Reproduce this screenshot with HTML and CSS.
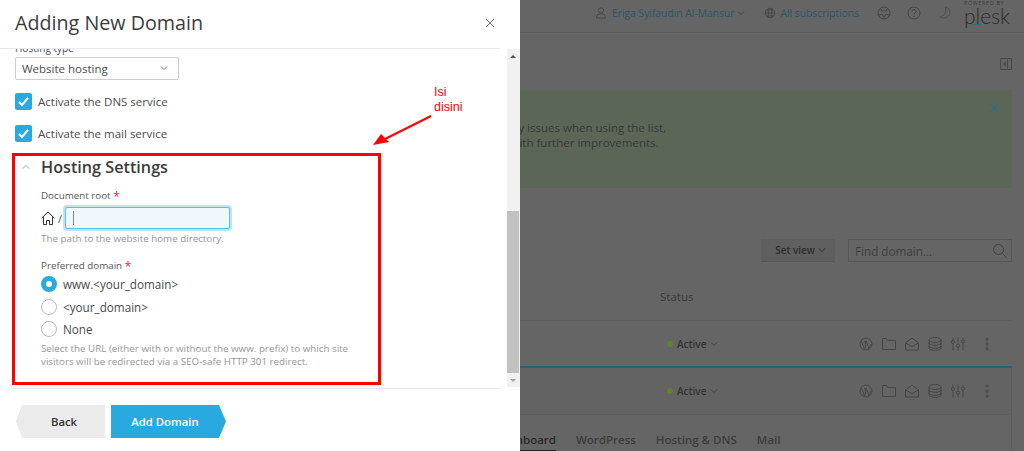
FILE: index.html
```html
<!DOCTYPE html>
<html>
<head>
    <meta charset="utf-8">
    <title>Adding New Domain</title>
    <link rel="stylesheet" href="styles.css">
</head>
<body>
    <div class="page">
        <div class="topbar">
            <svg class="top-icon" viewBox="0 0 14 14"><circle cx="7" cy="4" r="3"/><path d="M2 13v-2c0-2 2-3 5-3s5 1 5 3v2z"/></svg>
            <span class="top-link">Eriga Syifaudin Al-Mansur</span>
            <svg class="chev" viewBox="0 0 8 8"><path d="M1 2.500l3 3 3-3"/></svg>
            <svg class="top-icon globe" viewBox="0 0 14 14"><circle cx="7" cy="7" r="5.500"/><path d="M1.500 7h11M3 3.500h8M3 10.500h8M5 1.800v10.400M9 1.800v10.400"/></svg>
            <span class="top-link">All subscriptions</span>
            <svg class="top-round cat" viewBox="0 0 16 16"><circle cx="8" cy="8" r="6"/><path d="M4 3l2 3h4l2-3M3 10l3-1 2 3 2-3 3 1M8 12v2"/></svg>
            <svg class="top-round help" viewBox="0 0 16 16"><circle cx="8" cy="8" r="6"/><path d="M6 6.500c0-2.500 4-2.500 4 0 0 1.500-2 1.500-2 3M8 11v1"/></svg>
            <svg class="top-round moon" viewBox="0 0 16 16"><path d="M10 2c2 4 0 9-5 10 3 2 9 1 10-4 .5-3-2-6-5-6z"/></svg>
            <div class="logo">
                <span class="logo-small">POWERED BY</span>
                <span class="logo-name">plesk</span>
            </div>
        </div>

        <div class="panel-toggle">
            <svg viewBox="0 0 12 12"><path d="M.5.500h11v11H.5zM7.500.500v11"/><path class="fill" d="M5.500 3.500v5L2.500 6z"/></svg>
        </div>

        <div class="alert">
            <p>any issues when using the list,</p>
            <p class="alert-second">us with further improvements.</p>
            <svg class="alert-close" viewBox="0 0 10 10"><path d="M1.500 1.500l7 7M8.500 1.500l-7 7"/></svg>
        </div>

        <div class="toolbar">
            <div class="set-view">Set view <svg class="chev" viewBox="0 0 8 8"><path d="M1 2.500l3 3 3-3"/></svg></div>
            <div class="find">
                <span>Find domain...</span>
                <svg viewBox="0 0 16 16"><circle cx="6.500" cy="6.500" r="5"/><path d="M10.500 10.500l4 4"/></svg>
            </div>
        </div>

        <div class="table-head"><span>Status</span></div>

        <div class="row">
            <div class="status"><i class="dot"></i>Active <svg class="chev" viewBox="0 0 8 8"><path d="M1 2.500l3 3 3-3"/></svg></div>
            <div class="row-icons">
                <svg viewBox="0 0 14 14"><circle cx="7" cy="7" r="6"/><path d="M2.500 4.500l3 7.500 1.500-4.500-1.500-3.500M5 4.500h3M7.500 4.500l2.500 7.500 2-5"/></svg>
                <svg viewBox="0 0 14 14"><path d="M.5 12.500v-11h4l1 2h8v9z"/></svg>
                <svg viewBox="0 0 14 14"><path d="M.5 6l6.500-5 6.500 5v7H.5zM.5 6L7 9.500 13.500 6"/></svg>
                <svg viewBox="0 0 14 14"><ellipse cx="7" cy="3" rx="6" ry="2.500"/><path d="M1 3v8c0 3 12 3 12 0V3M1 6c0 3 12 3 12 0M1 9c0 3 12 3 12 0"/></svg>
                <svg viewBox="0 0 14 14"><path d="M2 .5v3M2 7v6.500M7 .5v6M7 10v3.500M12 .5v2M12 6v7.500"/><circle cx="2" cy="5" r="1.500"/><circle cx="7" cy="8.500" r="1.500"/><circle cx="12" cy="4.500" r="1.500"/></svg>
                <svg class="more" viewBox="0 0 4 14"><circle cx="2" cy="2" r="1.200"/><circle cx="2" cy="7" r="1.200"/><circle cx="2" cy="12" r="1.200"/></svg>
            </div>
        </div>

        <div class="row row-open">
            <div class="status"><i class="dot"></i>Active <svg class="chev" viewBox="0 0 8 8"><path d="M1 2.500l3 3 3-3"/></svg></div>
            <div class="row-icons">
                <svg viewBox="0 0 14 14"><circle cx="7" cy="7" r="6"/><path d="M2.500 4.500l3 7.500 1.500-4.500-1.500-3.500M5 4.500h3M7.500 4.500l2.500 7.500 2-5"/></svg>
                <svg viewBox="0 0 14 14"><path d="M.5 12.500v-11h4l1 2h8v9z"/></svg>
                <svg viewBox="0 0 14 14"><path d="M.5 6l6.500-5 6.500 5v7H.5zM.5 6L7 9.500 13.500 6"/></svg>
                <svg viewBox="0 0 14 14"><ellipse cx="7" cy="3" rx="6" ry="2.500"/><path d="M1 3v8c0 3 12 3 12 0V3M1 6c0 3 12 3 12 0M1 9c0 3 12 3 12 0"/></svg>
                <svg viewBox="0 0 14 14"><path d="M2 .5v3M2 7v6.500M7 .5v6M7 10v3.500M12 .5v2M12 6v7.500"/><circle cx="2" cy="5" r="1.500"/><circle cx="7" cy="8.500" r="1.500"/><circle cx="12" cy="4.500" r="1.500"/></svg>
                <svg class="more" viewBox="0 0 4 14"><circle cx="2" cy="2" r="1.200"/><circle cx="2" cy="7" r="1.200"/><circle cx="2" cy="12" r="1.200"/></svg>
            </div>
        </div>

        <div class="tabs">
            <span class="tab tab-active">Dashboard</span>
            <span class="tab">WordPress</span>
            <span class="tab">Hosting &amp; DNS</span>
            <span class="tab">Mail</span>
        </div>
    </div>

    <div class="drawer">
        <div class="drawer-head">
            <h1>Adding New Domain</h1>
            <svg class="close" viewBox="0 0 10 10"><path d="M1 1l8 8M9 1l-8 8"/></svg>
        </div>

        <div class="drawer-main">
            <div class="form">
                <div class="clipped-label">Hosting type</div>
                <div class="select">Website hosting <svg viewBox="0 0 8 8"><path d="M1 2.500l3 3 3-3"/></svg></div>

                <label class="check">
                    <svg viewBox="0 0 17 17"><rect width="17" height="17" rx="2"/><path d="M4 9l3 3 6-7"/></svg>
                    Activate the DNS service
                </label>
                <label class="check check-mail">
                    <svg viewBox="0 0 17 17"><rect width="17" height="17" rx="2"/><path d="M4 9l3 3 6-7"/></svg>
                    Activate the mail service
                </label>

                <div class="section-title">
                    <svg viewBox="0 0 10 10"><path d="M1 7l4-4 4 4"/></svg>
                    <h2>Hosting Settings</h2>
                </div>

                <div class="section-body">
                    <div class="field-label">Document root <span class="req">*</span></div>
                    <div class="path-row">
                        <svg viewBox="0 0 14 14"><path d="M.7 7L7 1l6.300 6M2.500 5.500v8h3v-4h3v4h3v-8"/></svg>
                        <span class="slash">/</span>
                        <div class="path-input"><i class="caret"></i></div>
                    </div>
                    <div class="hint hint-path">The path to the website home directory.</div>

                    <div class="field-label field-domain">Preferred domain <span class="req">*</span></div>
                    <div class="radio"><i class="bullet bullet-on"></i>www.&lt;your_domain&gt;</div>
                    <div class="radio"><i class="bullet"></i>&lt;your_domain&gt;</div>
                    <div class="radio"><i class="bullet"></i>None</div>
                    <div class="hint hint-domain">Select the URL (either with or without the www. prefix) to which site<br>visitors will be redirected via a SEO-safe HTTP 301 redirect.</div>
                </div>
            </div>

            <div class="scrollbar">
                <svg class="arrow" viewBox="0 0 8 4"><path d="M0 4l4-4 4 4z"/></svg>
                <div class="thumb"></div>
                <svg class="arrow arrow-down" viewBox="0 0 8 4"><path d="M0 0l4 4 4-4z"/></svg>
            </div>
        </div>

        <div class="drawer-foot">
            <div class="btn btn-back">Back</div>
            <div class="btn btn-add">Add Domain</div>
        </div>
    </div>

    <div class="mark-box"></div>
    <div class="mark-note">Isi<br>disini</div>
    <svg class="mark-arrow" viewBox="0 0 60 32"><path class="shaft" d="M58 1L12 24"/><path class="head" d="M0 30l8-11 8 8z"/></svg>
</body>
</html>
```

FILE: styles.css
```css
html {
    font-family: "Open Sans", Arial, sans-serif;
}

body {
    margin: 0;
    width: 1024px;
    height: 451px;
    overflow: hidden;
    position: relative;
    background-color: #656565;
}

p,
h1,
h2 {
    margin: 0;
    font-weight: normal;
}

svg {
    display: block;
    fill: none;
    stroke: currentColor;
}

.chev {
    width: 8px;
    height: 8px;
    stroke-width: 1;
}

/* dimmed page behind the drawer */
.page {
    height: 451px;
    padding-right: 12px;
    box-sizing: border-box;
    color: #333;
    font-size: 13px;
}

.topbar {
    height: 33px;
    box-sizing: border-box;
    margin-right: -12px;
    padding-bottom: 7px;
    border-bottom: 1px solid #5a5a5a;
    display: flex;
    align-items: center;
    justify-content: flex-end;
    color: #2f5668;
    font-size: 10.300px;
    position: relative;
}

.topbar .chev {
    margin-left: 3px;
    color: #454545;
}

.top-icon {
    width: 12px;
    height: 12px;
    margin-right: 5px;
    color: #444;
}

.globe {
    margin-left: 19px;
    margin-right: 4px;
}

.top-round {
    width: 16px;
    height: 16px;
    color: #454545;
    margin-left: 14px;
}

.cat {
    margin-left: 17px;
}

.moon {
    margin-left: 13px;
    color: #505050;
}

.logo {
    width: 47px;
    margin: 7px 13px 0 13px;
    height: 32px;
    color: #2b2b2b;
    position: relative;
    overflow: hidden;
}

.logo:after {
    content: "";
    position: absolute;
    left: 9px;
    top: 24px;
    width: 9px;
    height: 1px;
    background-color: #2f6f86;
}

.logo-small {
    display: block;
    font-size: 5.500px;
    line-height: 6px;
    letter-spacing: .6px;
    white-space: nowrap;
    color: #3c3c3c;
}

.logo-name {
    display: block;
    font-family: Lato, sans-serif;
    font-weight: 300;
    font-size: 21px;
    line-height: 20px;
}

.panel-toggle {
    height: 52px;
    padding-top: 5px;
    display: flex;
    align-items: center;
    justify-content: flex-end;
    color: #4a4a4a;
}

.panel-toggle svg {
    width: 12px;
    height: 12px;
}

.panel-toggle .fill {
    fill: #4a4a4a;
    stroke: none;
}

.alert {
    height: 98px;
    background-color: #5b6656;
    padding: 30px 0 0 521px;
    box-sizing: border-box;
    position: relative;
    font-size: 11.500px;
    line-height: 15px;
    color: #3a3a3a;
    white-space: nowrap;
}

.alert p {
    margin-left: -16px;
}

.alert .alert-second {
    margin-left: -26px;
}

.alert-close {
    position: absolute;
    right: 13px;
    top: 13px;
    width: 10px;
    height: 10px;
    color: #2f6f86;
    stroke-width: 1.300;
}

.toolbar {
    margin-top: 51px;
    height: 23px;
    display: flex;
    justify-content: flex-end;
    gap: 13px;
    font-size: 10px;
}

.set-view {
    width: 74px;
    display: flex;
    align-items: center;
    justify-content: flex-end;
    padding-right: 9px;
    box-sizing: border-box;
    gap: 3px;
    background-color: #5f5f5f;
    border-bottom: 1px solid #585858;
    font-weight: 600;
    color: #2e2e2e;
}

.find {
    width: 164px;
    border: 1px solid #585858;
    display: flex;
    align-items: center;
    justify-content: space-between;
    padding: 0 3px 0 6px;
    box-sizing: border-box;
    font-size: 11.700px;
    color: #3f3f3f;
}

.find svg {
    width: 16px;
    height: 16px;
    color: #444;
}

.table-head {
    height: 59px;
    box-sizing: border-box;
    border-bottom: 1px solid #5e5e5e;
    padding: 27px 0 0 660px;
    font-size: 11.500px;
    color: #3b3b3b;
}

.row {
    height: 47px;
    position: relative;
    display: flex;
    align-items: center;
    padding-left: 667px;
    box-sizing: border-box;
    border-bottom: 2px solid #2e5f73;
}

.row-open {
    height: 47px;
    border-bottom: 1px solid #5e5e5e;
    border-right: 1px solid #5a5a5a;
    background-color: #636363;
}

.status {
    display: flex;
    align-items: center;
    width: 192px;
    font-size: 10px;
    font-weight: 600;
    color: #333;
}

.status .chev {
    margin-left: 4px;
    color: #444;
}

.dot {
    width: 6px;
    height: 6px;
    border-radius: 50%;
    background-color: #62802f;
    margin-right: 4px;
}

.row-icons {
    display: flex;
    align-items: center;
    gap: 9px;
    color: #444;
}

.row-icons svg {
    width: 14px;
    height: 14px;
    stroke-width: .9;
}

.row-icons .more {
    width: 4px;
    margin-left: 11px;
}

.tabs {
    display: flex;
    gap: 20px;
    padding: 17px 0 0 495px;
    font-size: 11.500px;
    font-weight: 600;
    color: #3c3c3c;
    border-right: 1px solid #5a5a5a;
    height: 37px;
    box-sizing: border-box;
}

.tab-active {
    color: #2a2a2a;
    height: 18px;
    border-bottom: 2px solid #222;
}

/* drawer */
.drawer {
    position: absolute;
    left: 0;
    top: 0;
    width: 520px;
    height: 451px;
    background-color: #fff;
    display: flex;
    flex-direction: column;
    color: #4b4b4b;
}

.drawer-head {
    height: 49px;
    flex: none;
    box-sizing: border-box;
    width: 500px;
    border-bottom: 1px solid #e6e8ef;
    display: flex;
    align-items: center;
    justify-content: space-between;
    padding: 0 5px 3px 15px;
}

.drawer-head h1 {
    font-size: 19.700px;
    color: #3c3c3c;
}

.close {
    width: 10px;
    height: 10px;
    color: #777;
}

.drawer-main {
    height: 338px;
    flex: none;
    display: flex;
    justify-content: space-between;
    overflow: hidden;
}

.form {
    width: 500px;
    height: 338px;
    overflow: hidden;
    padding-left: 15px;
    box-sizing: border-box;
    font-size: 11.500px;
}

.clipped-label {
    font-size: 10px;
    line-height: 16px;
    margin-top: -9px;
}

.select {
    width: 164px;
    height: 23px;
    margin-top: 1px;
    box-sizing: border-box;
    border: 1px solid #ccc;
    border-radius: 2px;
    padding-left: 6px;
    line-height: 21px;
    position: relative;
}

.select svg {
    position: absolute;
    right: 10px;
    top: 6px;
    width: 8px;
    height: 8px;
    color: #777;
}

.check {
    display: flex;
    align-items: center;
    gap: 6px;
    height: 17px;
    margin-top: 13px;
}

.check svg {
    width: 17px;
    height: 17px;
    stroke: #fff;
    stroke-width: 2;
}

.check rect {
    fill: #28aae1;
    stroke: none;
}

.check-mail {
    margin-top: 15px;
}

.section-title {
    display: flex;
    align-items: center;
    height: 24px;
    margin-top: 13px;
}

.section-title svg {
    width: 8px;
    height: 8px;
    color: #888;
    margin: 0 11px 0 7px;
}

.section-title h2 {
    font-size: 16.200px;
    font-weight: 600;
    color: #3c3c3c;
}

.section-body {
    padding-left: 26px;
}

.field-label {
    font-size: 9.800px;
    line-height: 16px;
    margin-top: 9px;
    color: #555;
}

.req {
    color: #e0245e;
    font-size: 12px;
    line-height: 0;
    vertical-align: -2px;
}

.field-domain {
    margin-top: 13px;
    margin-bottom: -1px;
}

.path-row {
    display: flex;
    align-items: center;
    height: 22px;
    margin-top: 3px;
}

.path-row svg {
    width: 14px;
    height: 14px;
    color: #333;
}

.slash {
    margin: 0 3px;
    font-size: 11px;
}

.path-input {
    width: 165px;
    height: 22px;
    box-sizing: border-box;
    border: 1px solid #5cbdea;
    border-radius: 2px;
    box-shadow: 0 0 0 2px #bde4fa;
    background-color: #f0f8fd;
    padding: 3px 0 0 7px;
}

.caret {
    display: block;
    width: 1px;
    height: 14px;
    background-color: #888;
}

.hint {
    font-size: 9.800px;
    line-height: 13px;
    color: #969696;
}

.hint-path {
    margin-top: 3px;
}

.hint-domain {
    margin-top: 1px;
}

.radio {
    display: flex;
    align-items: center;
    gap: 6px;
    height: 22.500px;
    font-size: 11.700px;
}

.bullet {
    width: 16px;
    height: 16px;
    box-sizing: border-box;
    border: 1px solid #bbb;
    border-radius: 50%;
}

.bullet-on {
    border: 5px solid #28aae1;
}

.scrollbar {
    width: 13px;
    height: 338px;
    background-color: #f1f1f1;
    position: relative;
    color: #505050;
}

.thumb {
    position: absolute;
    left: 0;
    right: 1px;
    top: 162px;
    height: 162px;
    background-color: #c1c1c1;
}

.arrow {
    position: absolute;
    top: 6px;
    left: 3px;
    width: 6px;
    height: 3px;
    fill: currentColor;
    stroke: none;
}

.arrow-down {
    top: 330px;
    color: #a3a3a3;
}

.drawer-foot {
    margin: 1px 20px 0 13px;
    border-top: 1px solid #e6e6e6;
    flex: none;
    display: flex;
    gap: 6px;
    padding: 16px 0 0 3px;
}

.btn {
    height: 33px;
    line-height: 33px;
    text-align: center;
    font-size: 11.300px;
    font-weight: 600;
    box-sizing: border-box;
}

.btn-back {
    width: 89px;
    padding-left: 7px;
    background-color: #ebebeb;
    color: #333;
    clip-path: polygon(6px 0, 100% 0, 100% 100%, 6px 100%, 0 50%);
}

.btn-add {
    width: 115px;
    padding-right: 7px;
    background-color: #28aae1;
    color: #fff;
    clip-path: polygon(0 0, calc(100% - 7px) 0, 100% 50%, calc(100% - 7px) 100%, 0 100%);
}

/* red marks drawn over the screenshot */
.mark-box {
    position: absolute;
    left: 12px;
    top: 153px;
    width: 369px;
    height: 232px;
    box-sizing: border-box;
    border: 3px solid #f00;
}

.mark-note {
    position: absolute;
    left: 434px;
    top: 85px;
    font-family: "Liberation Sans", Arial, sans-serif;
    font-size: 12.500px;
    line-height: 15px;
    color: #f00;
}

.mark-arrow {
    position: absolute;
    left: 373px;
    top: 115px;
    width: 60px;
    height: 32px;
}

.mark-arrow .shaft {
    stroke: #f00;
    stroke-width: 2;
}

.mark-arrow .head {
    fill: #f00;
    stroke: none;
}
```
